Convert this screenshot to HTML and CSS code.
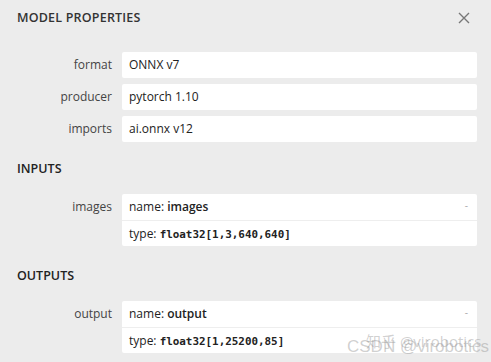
FILE: index.html
```html
<!DOCTYPE html>
<html lang="en">
<head>
    <meta charset="UTF-8">
    <title>Model Properties</title>
    <link rel="stylesheet" href="styles.css">
</head>
<body>
    <div class="sidebar">
        <!-- cabecera -->
        <div class="sidebar-header">
            <span class="sidebar-title">MODEL PROPERTIES</span>
            <svg class="close" viewBox="0 0 12 12" width="12" height="12">
                <path d="M1 1 L11 11 M11 1 L1 11" stroke="#777" stroke-width="1.4" fill="none"/>
            </svg>
        </div>

        <div class="props">
            <div class="prop">
                <div class="prop-name">format</div>
                <div class="prop-value"><div class="line">ONNX v7</div></div>
            </div>
            <div class="prop">
                <div class="prop-name">producer</div>
                <div class="prop-value"><div class="line">pytorch 1.10</div></div>
            </div>
            <div class="prop">
                <div class="prop-name">imports</div>
                <div class="prop-value"><div class="line">ai.onnx v12</div></div>
            </div>
        </div>

        <div class="section-title">INPUTS</div>
        <div class="props">
            <div class="prop">
                <div class="prop-name">images</div>
                <div class="prop-value">
                    <div class="line">name: <b>images</b><span class="toggle">-</span></div>
                    <div class="line sep">type: <code>float32[1,3,640,640]</code></div>
                </div>
            </div>
        </div>

        <div class="section-title outputs">OUTPUTS</div>
        <div class="props">
            <div class="prop">
                <div class="prop-name">output</div>
                <div class="prop-value">
                    <div class="line">name: <b>output</b><span class="toggle">-</span></div>
                    <div class="line sep">type: <code>float32[1,25200,85]</code></div>
                </div>
            </div>
        </div>
    </div>

    <!-- marcas de agua -->
    <div class="watermark wm-zhihu">知乎 @virobotics</div>
    <div class="watermark wm-csdn">CSDN @virobotics</div>
</body>
</html>
```

FILE: styles.css
```css
body {
    margin: 0;
    background: #ececec;
    font-family: "Open Sans", "Noto Sans CJK SC", sans-serif;
    font-size: 12px;
    color: #222;
    overflow: hidden;
}

.sidebar {
    padding: 0 14px 0 17px;
}

.sidebar-header {
    display: flex;
    justify-content: space-between;
    align-items: center;
    height: 35px;
}

.sidebar-title {
    font-weight: 600;
    font-size: 12.5px;
    color: #333;
    letter-spacing: 0.2px;
}

.close {
    margin-right: 7px;
}

.props {
    display: flex;
    flex-direction: column;
    gap: 6px;
    margin-top: 17px;
}

.prop {
    display: grid;
    grid-template-columns: 95px 1fr;
    column-gap: 10px;
}

.prop-name {
    text-align: right;
    color: #444;
    line-height: 26px;
}

.prop-value {
    background: #fff;
    border-radius: 2px;
}

.line {
    position: relative;
    height: 26px;
    line-height: 26px;
    padding: 0 7px;
}

.line.sep {
    border-top: 1px solid #eee;
    height: 25px;
}

.line b {
    font-weight: 600;
}

.line code {
    font-family: "DejaVu Sans Mono", monospace;
    font-size: 10.9px;
    font-weight: bold;
}

.toggle {
    position: absolute;
    right: 9px;
    top: -2px;
    color: #aaa;
    font-size: 10px;
}

.section-title {
    font-weight: 600;
    font-size: 12.5px;
    color: #222;
    margin-top: 18px;
}

.section-title.outputs {
    margin-top: 21px;
}

.section-title + .props {
    margin-top: 17px;
}

.watermark {
    position: absolute;
    color: rgba(150, 150, 150, 0.45);
    white-space: nowrap;
}

.wm-zhihu {
    left: 366px;
    top: 330px;
    font-size: 15px;
}

.wm-csdn {
    left: 347px;
    top: 337px;
    font-family: "Liberation Sans", sans-serif;
    font-size: 17px;
}
```
